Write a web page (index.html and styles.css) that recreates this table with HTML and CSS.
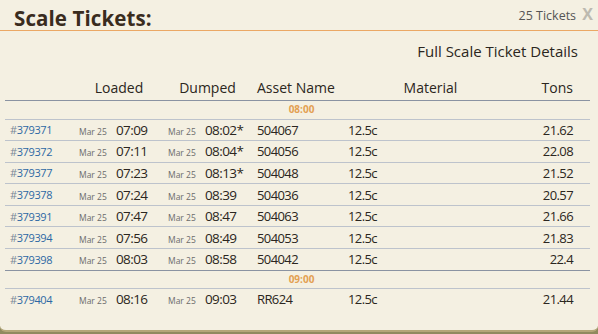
FILE: index.html
```html
<!DOCTYPE html>
<html>
<head>
<meta charset="utf-8">
<link rel="stylesheet" href="styles.css">
</head>
<body>
<div class="panel">
  <div class="head">
    <h1 class="title">Scale Tickets:</h1>
    <div class="count">25 Tickets <span class="close">X</span></div>
  </div>
  <div class="details">Full Scale Ticket Details</div>
  <div class="grid">
    <div class="row hdr">
      <div></div>
      <div class="c">Loaded</div>
      <div class="c">Dumped</div>
      <div class="asset">Asset Name</div>
      <div class="c">Material</div>
      <div class="r">Tons</div>
    </div>
    <div class="group">08:00</div>
    <div class="row"><div class="id"><span class="hash">#</span>379371</div><div class="dt"><span class="d">Mar 25</span><span class="t">07:09</span></div><div class="dt"><span class="d">Mar 25</span><span class="t">08:02*</span></div><div class="asset">504067</div><div class="mat">12.5c</div><div class="r">21.62</div></div>
    <div class="row"><div class="id"><span class="hash">#</span>379372</div><div class="dt"><span class="d">Mar 25</span><span class="t">07:11</span></div><div class="dt"><span class="d">Mar 25</span><span class="t">08:04*</span></div><div class="asset">504056</div><div class="mat">12.5c</div><div class="r">22.08</div></div>
    <div class="row"><div class="id"><span class="hash">#</span>379377</div><div class="dt"><span class="d">Mar 25</span><span class="t">07:23</span></div><div class="dt"><span class="d">Mar 25</span><span class="t">08:13*</span></div><div class="asset">504048</div><div class="mat">12.5c</div><div class="r">21.52</div></div>
    <div class="row"><div class="id"><span class="hash">#</span>379378</div><div class="dt"><span class="d">Mar 25</span><span class="t">07:24</span></div><div class="dt"><span class="d">Mar 25</span><span class="t">08:39</span></div><div class="asset">504036</div><div class="mat">12.5c</div><div class="r">20.57</div></div>
    <div class="row"><div class="id"><span class="hash">#</span>379391</div><div class="dt"><span class="d">Mar 25</span><span class="t">07:47</span></div><div class="dt"><span class="d">Mar 25</span><span class="t">08:47</span></div><div class="asset">504063</div><div class="mat">12.5c</div><div class="r">21.66</div></div>
    <div class="row"><div class="id"><span class="hash">#</span>379394</div><div class="dt"><span class="d">Mar 25</span><span class="t">07:56</span></div><div class="dt"><span class="d">Mar 25</span><span class="t">08:49</span></div><div class="asset">504053</div><div class="mat">12.5c</div><div class="r">21.83</div></div>
    <div class="row last"><div class="id"><span class="hash">#</span>379398</div><div class="dt"><span class="d">Mar 25</span><span class="t">08:03</span></div><div class="dt"><span class="d">Mar 25</span><span class="t">08:58</span></div><div class="asset">504042</div><div class="mat">12.5c</div><div class="r">22.4</div></div>
    <div class="group">09:00</div>
    <div class="row end"><div class="id"><span class="hash">#</span>379404</div><div class="dt"><span class="d">Mar 25</span><span class="t">08:16</span></div><div class="dt"><span class="d">Mar 25</span><span class="t">09:03</span></div><div class="asset">RR624</div><div class="mat">12.5c</div><div class="r">21.44</div></div>
  </div>
</div>
</body>
</html>
```
FILE: styles.css
```css
html, body {
  margin: 0;
  padding: 0;
  background: #8f8a5e;
}
body {
  width: 598px;
  height: 334px;
  overflow: hidden;
  font-family: "Open Sans", "DejaVu Sans", sans-serif;
  color: #2b2620;
}
.panel {
  width: 598px;
  height: 332px;
  background: #f4f0e2;
  border-bottom: 2px solid #b3a678;
  border-radius: 0 0 6px 6px;
  box-sizing: border-box;
}
.head {
  display: flex;
  justify-content: space-between;
  align-items: flex-start;
  height: 30px;
  border-bottom: 1px solid #eba865;
  box-sizing: content-box;
  padding: 0 5px 0 14px;
}
.title {
  margin: 0;
  font-size: 20.5px;
  font-weight: 700;
  color: #3a2c1e;
  line-height: 20px;
  padding-top: 8px;
  letter-spacing: 0.1px;
}
.count {
  font-size: 12.5px;
  color: #555;
  padding-top: 6px;
  line-height: 16px;
}
.close {
  color: #bdbab0;
  font-size: 16px;
  font-weight: 700;
  margin-left: 3px;
}
.details {
  text-align: right;
  font-size: 15px;
  padding: 10px 20px 0 2px;
  line-height: 21px;
  height: 21px;
  color: #2b2620;
}
.grid {
  margin: 14px 8px 0 5px;
}
.row {
  display: grid;
  grid-template-columns: 70px 87px 88px 91px 179px 70px;
  align-items: center;
  height: 20.6px;
  border-bottom: 1px solid #bdc3cc;
  font-size: 13px;
}
.row:not(.hdr) .asset,
.row:not(.hdr) .mat,
.row:not(.hdr) .r,
.t {
  letter-spacing: -0.6px;
}
.row.hdr {
  height: 24px;
  border-bottom: 1px solid #8a93a2;
  font-size: 14px;
  align-items: start;
}
.row.hdr > div {
  padding-top: 2px;
}
.row.last {
  border-bottom: 1px solid #8a93a2;
}
.row.end {
  border-bottom: none;
}
.c { text-align: center; }
.r { text-align: right; padding-right: 17px; }
.asset { padding-left: 7px; }
.row.hdr .c:nth-child(2) { padding-left: 1px; }
.row.hdr .c:nth-child(3) { padding-left: 3px; }
.id {
  padding-left: 5px;
  color: #2d68a4;
  font-size: 11px;
  letter-spacing: -0.4px;
}
.hash { color: #7a8898; }
.dt {
  display: flex;
  align-items: baseline;
  padding-left: 4px;
}
.row .dt:nth-child(3) { padding-left: 6px; }
.d {
  font-size: 8.5px;
  color: #6b6b6b;
  width: 37px;
}
.t { font-size: 13.5px; }
.mat { padding-left: 7px; }
.group {
  height: 17.5px;
  line-height: 17px;
  border-bottom: 1px solid #bdc3cc;
  text-align: center;
  color: #e3a052;
  font-size: 10px;
  font-weight: 700;
  padding-left: 8px;
}
```
